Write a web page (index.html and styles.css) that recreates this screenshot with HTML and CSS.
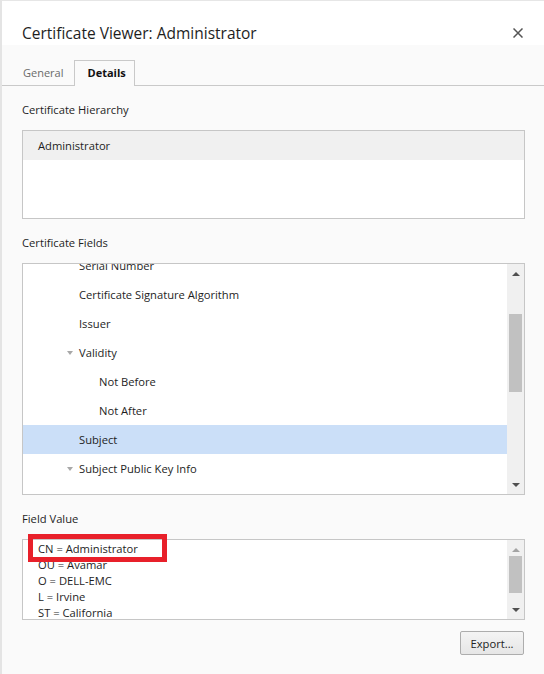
FILE: index.html
```html
<!DOCTYPE html>
<html>
<head>
<meta charset="utf-8">
<link rel="stylesheet" href="styles.css">
</head>
<body>
<div class="dialog">
  <div class="header">
    <div class="title">Certificate Viewer: Administrator</div>
    <svg class="close" width="10" height="10" viewBox="0 0 10 10"><path d="M0.5 0.5L9.5 9.5M9.5 0.5L0.5 9.5" stroke="#555" stroke-width="1.5" fill="none"/></svg>
  </div>
  <div class="tabs">
    <div class="tab">General</div>
    <div class="tab active">Details</div>
  </div>
  <div class="content">
    <div class="label">Certificate Hierarchy</div>
    <div class="box hierarchy">
      <div class="hrow">Administrator</div>
    </div>

    <div class="label">Certificate Fields</div>
    <div class="box fields">
      <div class="tree">
        <div class="tree-inner">
          <div class="row l1">Serial Number</div>
          <div class="row l1">Certificate Signature Algorithm</div>
          <div class="row l1">Issuer</div>
          <div class="row l1 parent"><span class="tri"></span>Validity</div>
          <div class="row l2">Not Before</div>
          <div class="row l2">Not After</div>
          <div class="row l1 selected">Subject</div>
          <div class="row l1 parent"><span class="tri"></span>Subject Public Key Info</div>
          <div class="row l2">Subject Public Key Algorithm</div>
        </div>
      </div>
      <div class="scrollbar big">
        <span class="arrow up"></span>
        <div class="track"><div class="thumb"></div></div>
        <span class="arrow down"></span>
      </div>
    </div>

    <div class="label">Field Value</div>
    <div class="box value">
      <div class="lines">
        <div class="line">CN = Administrator</div>
        <div class="line">OU = Avamar</div>
        <div class="line">O = DELL-EMC</div>
        <div class="line">L = Irvine</div>
        <div class="line">ST = California</div>
      </div>
      <div class="scrollbar small">
        <span class="arrow up dim"></span>
        <div class="track"><div class="thumb"></div></div>
        <span class="arrow down"></span>
      </div>
      <div class="highlight"></div>
    </div>

    <div class="actions">
      <button class="btn">Export...</button>
    </div>
  </div>
</div>
</body>
</html>
```

FILE: styles.css
```css
* { box-sizing: border-box; }
html, body {
  margin: 0;
  padding: 0;
  background: #fafafa;
}
body {
  font-family: "Open Sans", "Noto Sans", sans-serif;
  font-size: 11.2px;
  color: #1e1e1e;
}
.dialog {
  width: 544px;
  height: 674px;
  border-left: 2px solid #e4e4e4;
  border-top: 1px solid #e6e6e6;
  background: #fafafa;
  overflow: hidden;
}
.header {
  height: 44px;
  background: #ffffff;
  display: flex;
  align-items: center;
  justify-content: space-between;
  padding: 20px 21px 0 20px;
}
.title {
  font-size: 15.5px;
  color: #1e1e1e;
  line-height: 22px;
}
.close {
  display: block;
}
.tabs {
  height: 41px;
  display: flex;
  align-items: flex-end;
  padding-left: 10px;
  border-bottom: 1px solid #c9c9c9;
}
.tab {
  height: 26px;
  line-height: 24px;
  padding: 0 10px 0 10px;
  font-size: 11px;
  color: #6a6a6a;
  border: 1px solid transparent;
  border-bottom: none;
  margin-bottom: -1px;
}
.tab.active {
  color: #111;
  font-weight: bold;
  border-color: #c9c9c9;
  background: #fafafa;
  padding: 0 8px 0 12px;
  height: 26px;
}
.content {
  padding: 14px 19px 0 20px;
  display: flex;
  flex-direction: column;
}
.label {
  line-height: 20px;
  height: 20px;
  margin-bottom: 10px;
}
.box {
  border: 1px solid #c6c6c6;
  background: #ffffff;
}
.hierarchy {
  height: 89px;
  margin-bottom: 14px;
}
.hrow {
  height: 29px;
  line-height: 29px;
  background: #f0f0f0;
  padding-left: 15px;
}
.fields {
  height: 232px;
  display: flex;
  margin-bottom: 14px;
}
.tree {
  flex: 1;
  overflow: hidden;
}
.tree-inner {
  margin-top: -13px;
}
.row {
  height: 29px;
  line-height: 29px;
  white-space: nowrap;
  position: relative;
}
.row.l1 { padding-left: 56px; }
.row.l2 { padding-left: 76px; }
.row.selected { background: #cbdff8; }
.tri {
  position: absolute;
  left: 44px;
  top: 13px;
  width: 0;
  height: 0;
  border-left: 3.5px solid transparent;
  border-right: 3.5px solid transparent;
  border-top: 4px solid #a8a8a8;
}
.scrollbar {
  width: 17px;
  background: #f0f0f0;
  display: flex;
  flex-direction: column;
  align-items: center;
}
.track {
  flex: 1;
  width: 100%;
  padding: 0 1px 0 2px;
}
.thumb {
  background: #c1c1c1;
  width: 13px;
}
.arrow {
  width: 0;
  height: 0;
  border-left: 4px solid transparent;
  border-right: 4px solid transparent;
}
.arrow.up {
  border-bottom: 4px solid #505050;
}
.arrow.up.dim {
  border-bottom-color: #a3a3a3;
}
.arrow.down {
  border-top: 4px solid #505050;
}
.big .arrow.up { margin: 8px 0 0; }
.big .track { padding-top: 38px; }
.big .thumb { height: 78px; }
.big .arrow.down { margin: 0 0 7px; }
.value {
  height: 81px;
  display: flex;
  position: relative;
}
.lines {
  flex: 1;
  padding: 1px 0 0 15px;
}
.line {
  height: 16px;
  line-height: 16px;
  white-space: nowrap;
}
.small .arrow.up { margin: 8px 0 0; }
.small .track { padding-top: 4px; }
.small .thumb { height: 37px; }
.small .arrow.down { margin: 0 0 7px; }
.highlight {
  position: absolute;
  left: 5px;
  top: -6px;
  width: 139px;
  height: 28px;
  border: 5px solid #e8202a;
}
.actions {
  display: flex;
  justify-content: flex-end;
  margin-top: 11px;
  padding-right: 1px;
}
.btn {
  font-family: "Open Sans", "Noto Sans", sans-serif;
  font-size: 11.2px;
  color: #222;
  height: 24px;
  width: 64px;
  padding: 0;
  border: 1px solid #adadad;
  border-radius: 2px;
  background: linear-gradient(#f4f4f4, #e6e6e6);
}
```
